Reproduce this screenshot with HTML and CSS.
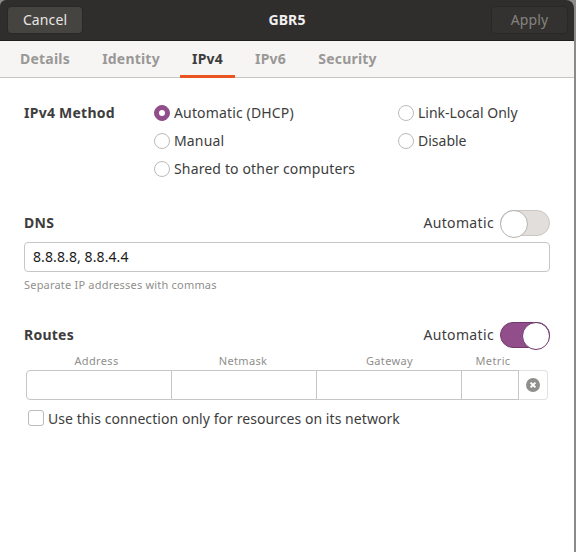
FILE: index.html
```html
<!DOCTYPE html>
<html lang="en">
<head>
    <meta charset="UTF-8">
    <meta name="viewport" content="width=device-width, initial-scale=1.0">
    <title>GBR5</title>
    <link rel="stylesheet" href="styles.css">
</head>
<body>
    <div class="window">
        <header class="titlebar">
            <button class="btn">Cancel</button>
            <h1 class="title">GBR5</h1>
            <button class="btn btn-disabled">Apply</button>
        </header>

        <nav class="tabs">
            <span class="tab tab-details">Details</span>
            <span class="tab tab-identity">Identity</span>
            <span class="tab tab-ipv4 active">IPv4</span>
            <span class="tab tab-ipv6">IPv6</span>
            <span class="tab tab-security">Security</span>
        </nav>

        <main class="content">
            <section class="method">
                <h2 class="label">IPv4 Method</h2>
                <div class="radio-col">
                    <div class="radio-row"><span class="radio checked"></span>Automatic (DHCP)</div>
                    <div class="radio-row"><span class="radio"></span>Manual</div>
                    <div class="radio-row"><span class="radio"></span>Shared to other computers</div>
                </div>
                <div class="radio-col radio-col-tight">
                    <div class="radio-row"><span class="radio"></span>Link-Local Only</div>
                    <div class="radio-row"><span class="radio"></span>Disable</div>
                </div>
            </section>

            <section class="dns">
                <div class="section-head">
                    <h2 class="label">DNS</h2>
                    <div class="auto">Automatic <span class="switch"></span></div>
                </div>
                <div class="entry">8.8.8.8, 8.8.4.4</div>
                <p class="hint">Separate IP addresses with commas</p>
            </section>

            <section class="routes">
                <div class="section-head">
                    <h2 class="label">Routes</h2>
                    <div class="auto">Automatic <span class="switch on"></span></div>
                </div>
                <div class="route-grid">
                    <span class="col-title col-address">Address</span>
                    <span class="col-title col-netmask">Netmask</span>
                    <span class="col-title">Gateway</span>
                    <span class="col-title col-metric">Metric</span>
                    <span></span>
                    <div class="cell first"></div>
                    <div class="cell"></div>
                    <div class="cell"></div>
                    <div class="cell"></div>
                    <div class="cell-btn">
                        <svg width="14" height="14" viewBox="0 0 14 14">
                            <circle cx="7" cy="7" r="7" fill="#8f8f8d"/>
                            <path d="M4.6 4.6l4.8 4.8M9.4 4.6l-4.8 4.8" stroke="#fff" stroke-width="2"/>
                        </svg>
                    </div>
                </div>
                <div class="check-row"><span class="check"></span>Use this connection only for resources on its network</div>
            </section>
        </main>
    </div>
</body>
</html>
```

FILE: styles.css
```css
* {
  margin: 0;
  padding: 0;
  box-sizing: border-box;
}

html,
body {
  height: 100%;
}

body {
  font-family: "Noto Sans", "Open Sans", sans-serif;
  font-size: 14px;
  letter-spacing: 0.1px;
  color: #3d3d3d;
  background: #fff;
  overflow: hidden;
}

.window {
  width: 576px;
  height: 552px;
  display: flex;
  flex-direction: column;
  background: #8d8d8d;
  border-right: 2px solid #8a8a8a;
}

.titlebar {
  height: 41px;
  flex: none;
  display: flex;
  align-items: center;
  justify-content: space-between;
  padding: 0 6px 1px 7px;
  background: #302e2d;
  border-bottom: 1px solid #1e1d1c;
  border-radius: 6px 8px 0 0;
}

.title {
  font-size: 14px;
  font-weight: 700;
  color: #f2f0ef;
}

.btn {
  width: 76px;
  height: 28px;
  font-family: inherit;
  font-size: 14px;
  letter-spacing: 0.1px;
  color: #e8e6e3;
  background: #464441;
  border: 1px solid #2a2827;
  border-radius: 4px;
}

.btn-disabled {
  width: 77px;
  color: #84827f;
  background: #343230;
}

.tabs {
  height: 37px;
  flex: none;
  display: flex;
  background: #f6f5f4;
  border-bottom: 1px solid #c8c6c4;
}

.tab {
  height: 36px;
  line-height: 35px;
  font-weight: 700;
  letter-spacing: 0.2px;
  color: #9a9896;
  text-align: center;
}

.tab-details {
  width: 90px;
}

.tab-identity {
  width: 82px;
}

.tab-ipv4 {
  width: 55px;
  margin-left: 8px;
}

.tab-ipv6 {
  width: 71px;
}

.tab-security {
  width: 83px;
}

.tab.active {
  color: #3d3d3d;
  border-bottom: 3px solid #e95420;
  height: 37px;
}

.content {
  flex: 1;
  padding: 21px 24px 0;
  background: #fff;
}

.label {
  font-size: 14px;
  font-weight: 700;
  letter-spacing: 0.25px;
  color: #3d3d3d;
}

.method {
  display: grid;
  grid-template-columns: 130px 244px 1fr;
  height: 84px;
}

.method .label {
  line-height: 28px;
}

.radio-col {
  letter-spacing: 0.15px;
}

.radio-col-tight {
  letter-spacing: 0;
}

.radio-row {
  height: 28px;
  padding-bottom: 2px;
  display: flex;
  align-items: center;
  gap: 4px;
}

.radio {
  width: 16px;
  height: 16px;
  margin-top: 2px;
  border: 1px solid #bdbbb8;
  border-radius: 50%;
  background: #fff;
}

.radio.checked {
  background: #924d8b;
  border-color: #924d8b;
  display: flex;
  align-items: center;
  justify-content: center;
}

.radio.checked::after {
  content: "";
  width: 6px;
  height: 6px;
  background: #fff;
  border-radius: 50%;
}

.dns {
  margin-top: 26px;
}

.section-head {
  height: 26px;
  display: flex;
  align-items: center;
  justify-content: space-between;
}

.auto {
  display: flex;
  align-items: center;
  gap: 6px;
  letter-spacing: 0.35px;
}

.switch {
  position: relative;
  width: 50px;
  height: 26px;
  margin-top: 2px;
  background: #e1dedb;
  border: 1px solid #cdc7c2;
  border-radius: 13px;
}

.switch::after {
  content: "";
  position: absolute;
  left: -1px;
  top: -1px;
  width: 26px;
  height: 26px;
  background: #fff;
  border: 1px solid #b6b3af;
  border-radius: 50%;
}

.switch.on {
  background: #924d8b;
  border-color: #6f3a6a;
}

.switch.on::after {
  left: auto;
  right: -1px;
  border-color: #6f3a6a;
}

.entry {
  height: 30px;
  margin-top: 7px;
  padding-left: 8px;
  line-height: 28px;
  color: #1a1a1a;
  border: 1px solid #c8c6c4;
  border-radius: 4px;
}

.hint {
  margin-top: 5px;
  font-size: 11px;
  line-height: 16px;
  letter-spacing: 0.2px;
  color: #8f8f8d;
}

.routes {
  margin-top: 28px;
}

.route-grid {
  display: grid;
  grid-template-columns: 146px 145px 145px 57px 29px;
  grid-template-rows: 18px 30px;
  margin: 5px 2px 0;
}

.col-title {
  font-size: 11px;
  line-height: 17px;
  letter-spacing: 0.35px;
  text-align: center;
  color: #8f8f8d;
}

.col-address {
  padding-right: 5px;
}

.col-netmask {
  padding-right: 3px;
}

.col-metric {
  padding-left: 5px;
}

.cell {
  border: 1px solid #c8c6c4;
  border-left: 0;
}

.cell.first {
  border-left: 1px solid #c8c6c4;
  border-radius: 4px 0 0 4px;
}

.cell-btn {
  display: flex;
  align-items: center;
  justify-content: center;
  border: 1px solid #e4e2e0;
  border-left: 0;
  border-radius: 0 4px 4px 0;
}

.check-row {
  display: flex;
  align-items: center;
  gap: 4px;
  height: 16px;
  margin: 10px 0 0 4px;
  letter-spacing: 0.06px;
}

.check {
  width: 16px;
  height: 16px;
  border: 1px solid #bdbbb8;
  border-radius: 3px;
}
```
